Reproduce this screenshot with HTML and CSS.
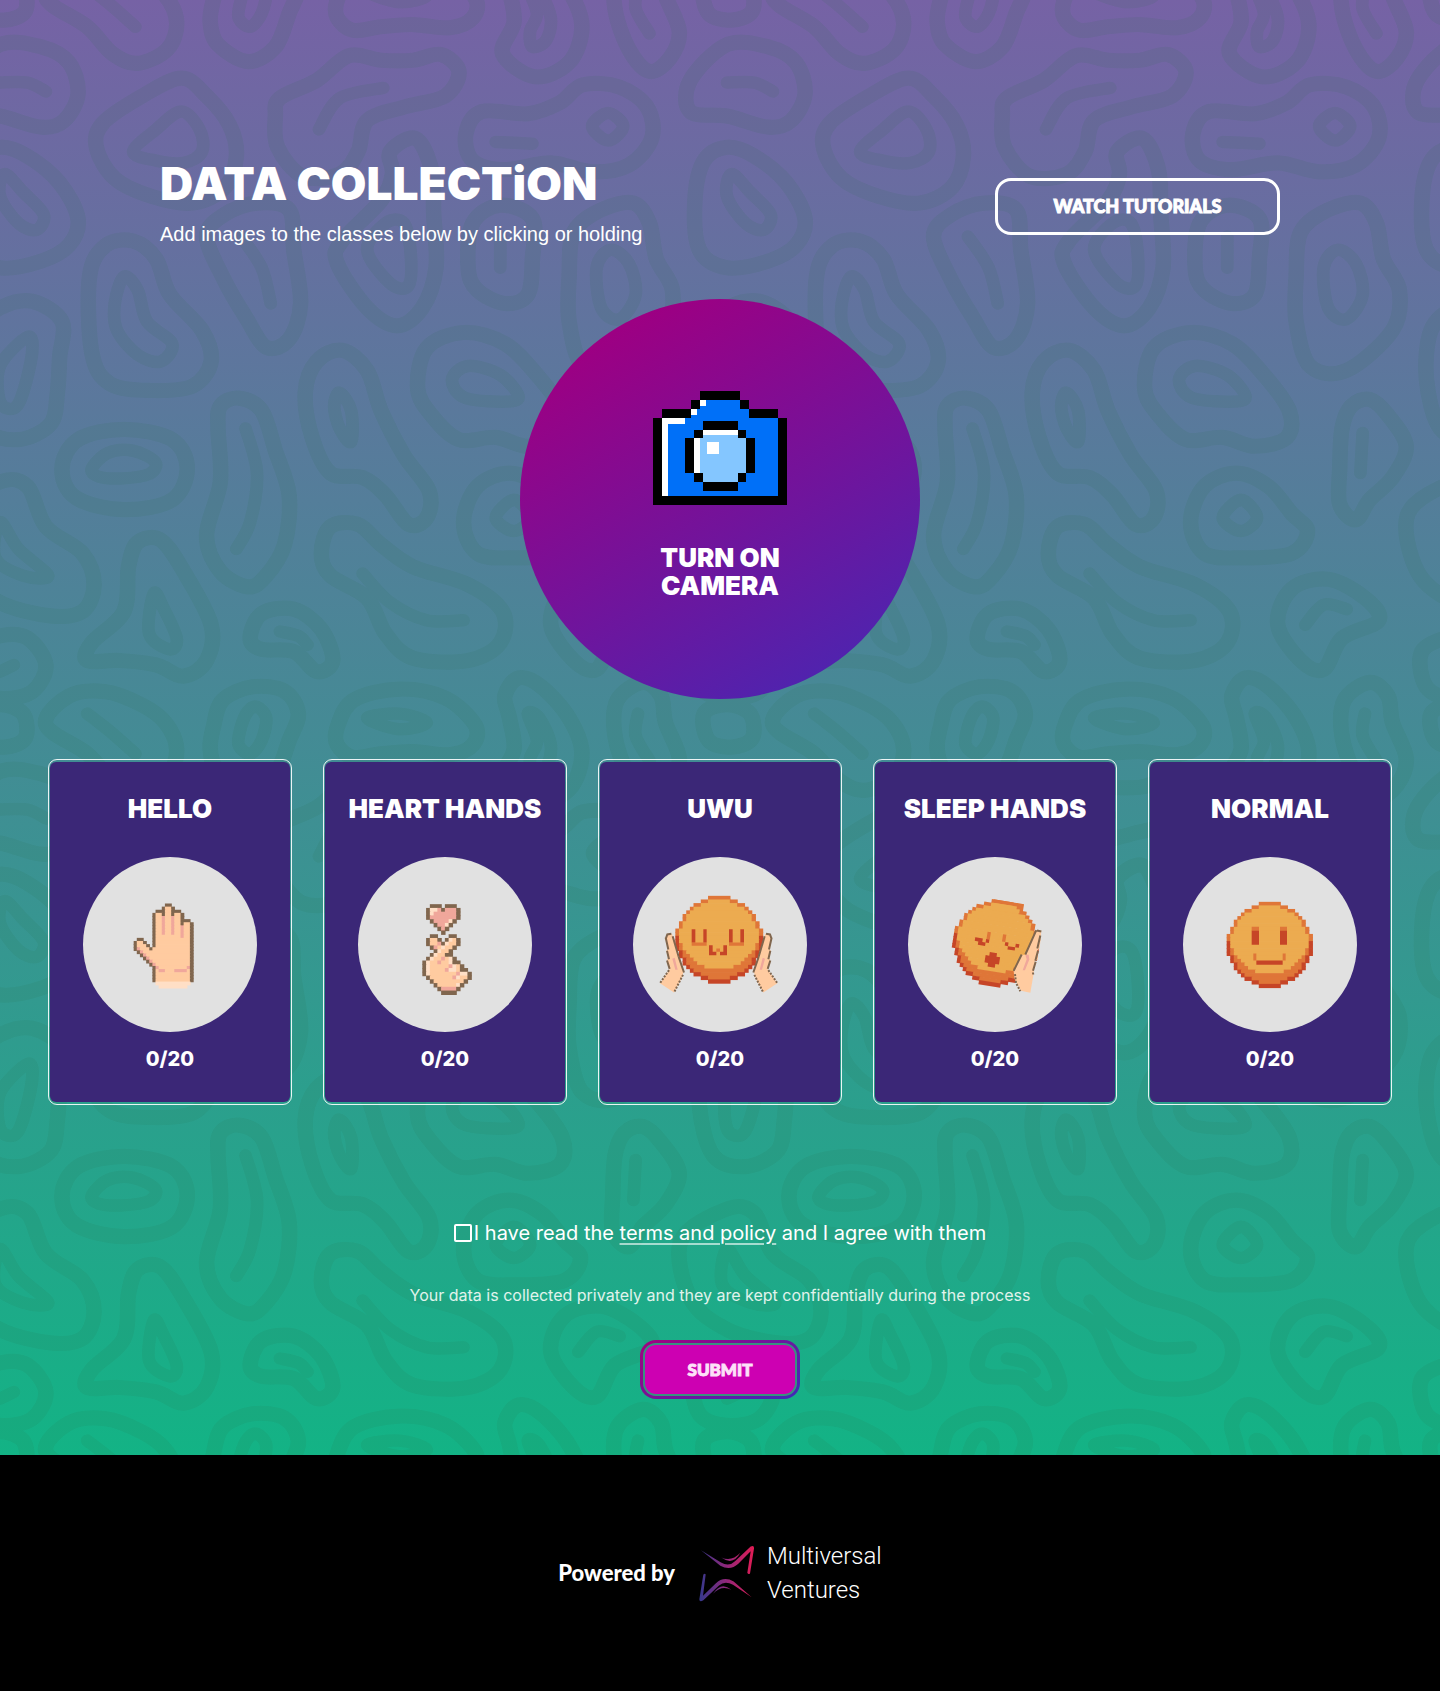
FILE: index.html
```html
<!DOCTYPE html>
<html lang="en">
<head>
    <meta charset="UTF-8">
    <meta name="viewport" content="width=device-width, initial-scale=1.0">
    <title>Data Collection</title>
    <link rel="stylesheet" href="styles.css">
</head>
<body>
    <main class="page">
        <svg class="page-pattern" aria-hidden="true">
            <defs>
                <pattern id="blobPattern" width="727" height="727" patternUnits="userSpaceOnUse"></pattern>
            </defs>
            <rect width="100%" height="100%" fill="url(#blobPattern)"/>
        </svg>

        <header class="header">
            <div class="header-text">
                <h1>DATA COLLECTiON</h1>
                <p>Add images to the classes below by clicking or holding</p>
            </div>
            <button type="button" class="tutorial-button">WATCH TUTORIALS</button>
        </header>

        <button type="button" class="camera-button">
            <svg class="camera-icon" viewBox="39 33 402 341" shape-rendering="crispEdges" aria-hidden="true">
                <path fill="#0070f8" d="M65 112h350v236H65zM180 59h121v55H180zM153 86h174v30H153z"/>
                <path fill="#fff" d="M65 112h18v236H65zM65 112h70v18H65zM180 59h17v18h-17zM153 86h18v18h-18z"/>
                <path fill="#000" d="M180 33h121v26H180zM153 59h27v27h-27zM301 59h26v27h-26zM65 86h88v26H65zM327 86h88v26h-88zM39 112h26v262H39zM415 112h26v262h-26zM39 348h402v26H39z"/>
                <path fill="#84c6ff" d="M188 148h105v157H188zM162 174h157v105H162z"/>
                <path fill="#fff" d="M188 148h105v17H188zM162 174h18v105h-18zM200 186h36v36h-36z"/>
                <path fill="#000" d="M188 122h105v26H188zM162 148h26v26h-26zM293 148h26v26h-26zM135 174h27v105h-27zM319 174h26v105h-26zM162 279h26v26h-26zM293 279h26v26h-26zM188 305h105v26H188z"/>
            </svg>
            <span class="camera-label">TURN ON<br>CAMERA</span>
        </button>

        <section class="cards">
            <div class="card">
                <h2>HELLO</h2>
                <svg class="card-picture" viewBox="129 321 522 524" aria-hidden="true">
                    <g data-sprite="hand" data-x="281" data-y="460" data-size="9.37"></g>
                </svg>
                <p class="card-count">0/20</p>
            </div>
            <div class="card">
                <h2>HEART HANDS</h2>
                <svg class="card-picture" viewBox="114 321 522 524" aria-hidden="true">
                    <g data-sprite="heart" data-x="307" data-y="462" data-size="11.27"></g>
                </svg>
                <p class="card-count">0/20</p>
            </div>
            <div class="card">
                <h2>UWU</h2>
                <svg class="card-picture" viewBox="129 321 522 524" aria-hidden="true">
                    <g data-sprite="face" data-x="256" data-y="437" data-size="10.9"></g>
                    <path fill="#df7638" d="M305 577h45v10h-45zM417 577h45v10h-45zM379 595h11v10h-11z"/>
                    <path fill="#c64527" d="M305 537h11v40h-11zM340 537h10v40h-10zM417 537h11v40h-11zM451 537h11v40h-11zM357 585h11v20h11v10h-22zM400 585h11v30h-21v-10h10z"/>
                    <g id="sideHand">
                        <path fill="#ffcba0" d="M228 562L232 551L246 551L266 618L281 664L275 684L252 727L210 699L239 657L231 628L235 622L229 602L234 597Z"/>
                        <path fill="#f0a79b" d="M247 626l7-3l9 36h-7z"/>
                        <path class="hand-line" d="M228 564L232 553L244 551M248 558L266 620M266 620L282 667M227 562L235 598M231 602L237 627M231 631L239 656"/>
                        <path class="hand-dots" d="M237 660L210 699M279 674L252 727"/>
                    </g>
                    <use href="#sideHand" transform="translate(772 0) scale(-1 1)"/>
                </svg>
                <p class="card-count">0/20</p>
            </div>
            <div class="card">
                <h2>SLEEP HANDS</h2>
                <svg class="card-picture" viewBox="129 321 522 524" aria-hidden="true">
                    <g transform="rotate(9 392 578)">
                        <path fill="#df7638" d="M366 450h92v24h11v12h-103z"/>
                        <g data-sprite="face" data-x="264" data-y="450" data-size="10.7"></g>
                        <path fill="#ecab50" d="M366 460h72v20h-72zM438 468h10v12h-10z"/>
                        <path fill="#df7638" d="M363 549h10v22h-10zM410 549h10v22h-10z"/>
                        <path fill="#c64527" d="M319 571h10v11h11v10h22v-10h10v-11h-10v11h-10v-11h-22v-0h-11zM410 571h10v11h10v10h22v-10h11v-11h-11v11h-22v-11zM379 608h22v11h11v22h-11v11h-22v-11h-11v-22h11z"/>
                    </g>
                    <path fill="#ffcba0" d="M514 540L529 542L524 595L517 600L519 628L510 632L506 670L496 728L468 722L448 685L446 662L470 614L481 614Z"/>
                    <path fill="#f0a79b" d="M481 614h10l2 14l-13 32h-7l12-33z"/>
                    <path class="hand-line" d="M514 540L481 613M470 613L446 662M516 541L529 544M526 556L517 595M519 602L511 632M512 635L504 662"/>
                    <path class="hand-dots" d="M450 672L453 698L466 723M504 667L505 676"/>
                </svg>
                <p class="card-count">0/20</p>
            </div>
            <div class="card">
                <h2>NORMAL</h2>
                <svg class="card-picture" viewBox="129 321 522 524" aria-hidden="true">
                    <g data-sprite="face" data-x="260" data-y="455" data-size="10.7"></g>
                    <path fill="#df7638" d="M335 530h22v11h-22zM420 530h21v11h-21zM340 610h9v21h-9zM428 610h9v21h-9z"/>
                    <path fill="#c64527" d="M335 541h22v43h-22zM420 541h21v43h-21zM349 631h79v13h-79z"/>
                </svg>
                <p class="card-count">0/20</p>
            </div>
        </section>

        <form class="submit-form">
            <div class="terms">
                <input type="checkbox" id="terms">
                <label for="terms">I have read the <a href="#">terms and policy</a> and I agree with them</label>
            </div>
            <p class="notice">Your data is collected privately and they are kept confidentially during the process</p>
            <button type="submit" class="submit-button">SUBMIT</button>
        </form>
    </main>

    <footer class="footer">
        <span class="powered">Powered by</span>
        <div class="brand">
            <svg class="brand-logo" viewBox="482 72 168 170" aria-hidden="true">
                <defs>
                    <linearGradient id="logoGradient" gradientUnits="userSpaceOnUse" x1="484" y1="0" x2="648" y2="0">
                        <stop offset="0" stop-color="#36388c"/>
                        <stop offset="0.5" stop-color="#92277a"/>
                        <stop offset="1" stop-color="#e31c54"/>
                    </linearGradient>
                </defs>
                <path fill="url(#logoGradient)" d="M488 87L548 124Q572 138 590 120L637 76Q648 71 647 82L635 157Q630 161 627 155L637 90L600 128Q576 150 546 134ZM549 109Q580 123 606 95Q584 135 549 109Z"/>
                <path fill="url(#logoGradient)" d="M640 228L584 191Q560 177 542 193L495 237Q483 244 483 234L495 160Q500 155 502 160L494 224L532 187Q556 164 586 181ZM579 206Q550 190 524 218Q548 180 579 206Z"/>
            </svg>
            <span class="brand-name">Multiversal<br>Ventures</span>
        </div>
    </footer>

    <script src="script.js"></script>
</body>
</html>
```
FILE: styles.css
```css
* {
    box-sizing: border-box;
}
body {
    margin: 0;
    background-color: #000;
    color: #fff;
    font-family: Inter, "Open Sans", sans-serif;
}
h1,
h2,
p {
    margin: 0;
}
button {
    font-family: inherit;
    color: #fff;
    cursor: pointer;
}

.page {
    position: relative;
    display: flex;
    flex-direction: column;
    align-items: center;
    padding: 165px 50px 56px;
    background: linear-gradient(#7662a5, #13b385);
}
/* Doodle pattern behind the whole page */
.page-pattern {
    position: absolute;
    inset: 0;
    width: 100%;
    height: 100%;
}
.page > :not(.page-pattern) {
    position: relative;
}

.header {
    display: flex;
    flex-wrap: wrap;
    gap: 20px;
    align-items: center;
    justify-content: space-between;
    width: 100%;
    max-width: 1120px;
}
.header h1 {
    font-size: 46px;
    font-weight: 900;
    line-height: 36px;
    margin-bottom: 20px;
}
.header p {
    font-family: "Liberation Sans", Arial, sans-serif;
    font-size: 20px;
    line-height: 26px;
}
.tutorial-button {
    width: 285px;
    height: 57px;
    border: 3px solid #fff;
    border-radius: 16px;
    background: transparent;
    font-family: Lato, sans-serif;
    font-size: 18px;
    font-weight: 900;
    -webkit-text-stroke: 1px #fff;
}

.camera-button {
    display: flex;
    flex-direction: column;
    align-items: center;
    width: 400px;
    height: 400px;
    margin-top: 52px;
    padding: 92px 0 0;
    border: none;
    border-radius: 50%;
    background: linear-gradient(150deg, #9c0083 14%, #4528b4 98%);
}
.camera-icon {
    width: 134px;
    height: 114px;
}
.camera-label {
    margin-top: 39px;
    font-size: 26px;
    font-weight: 900;
    line-height: 28px;
}

.cards {
    display: grid;
    grid-template-columns: repeat(auto-fit, 240px);
    justify-content: center;
    gap: 35px;
    width: 100%;
    margin-top: 63px;
}
.card {
    position: relative;
    display: flex;
    flex-direction: column;
    align-items: center;
    padding: 33px 0 31px;
    border-radius: 6px;
    background-color: #3b2777;
}
.card::before {
    content: "";
    position: absolute;
    inset: -3px -2px;
    border: 1px solid rgba(255, 255, 255, 0.9);
    border-radius: 9px;
}
.card h2 {
    font-size: 26px;
    font-weight: 900;
    line-height: 28px;
}
.card-picture {
    width: 174px;
    height: 175px;
    margin-top: 34px;
    border-radius: 50%;
    background-color: #e1e1e1;
}
.card-count {
    margin-top: 15px;
    font-size: 20px;
    font-weight: 800;
    line-height: 24px;
}
.hand-line,
.hand-dots {
    fill: none;
    stroke: #80664e;
    stroke-width: 6;
}
.hand-dots {
    stroke-dasharray: 6 4;
}

.submit-form {
    display: flex;
    flex-direction: column;
    align-items: center;
    margin-top: 119px;
}
.terms {
    display: flex;
    align-items: center;
    gap: 2px;
    font-size: 20px;
    line-height: 24px;
}
.terms input {
    appearance: none;
    width: 18px;
    height: 18px;
    margin: 0;
    border: 2px solid #fff;
    border-radius: 2px;
}
.terms input:checked {
    background-color: #cd00b2;
}
.terms a {
    color: #fff;
    text-decoration-color: rgba(255, 255, 255, 0.6);
    text-underline-offset: 3px;
}
.notice {
    margin-top: 40px;
    font-size: 16px;
    line-height: 20px;
    color: #e0f3ec;
}
.submit-button {
    width: 160px;
    height: 59px;
    margin-top: 35px;
    padding: 2px;
    border: 3px solid transparent;
    border-radius: 16px;
    background:
        linear-gradient(#cd00b2, #cd00b2) content-box,
        linear-gradient(#37927f, #37927f) padding-box,
        linear-gradient(150deg, #a3007f, #3f2ab8) border-box;
    font-family: Lato, sans-serif;
    font-size: 17px;
    font-weight: 900;
    color: #fde0f8;
    -webkit-text-stroke: 1px #fde0f8;
}

.footer {
    display: flex;
    align-items: center;
    justify-content: center;
    gap: 24px;
    padding: 84px 20px;
}
.powered {
    font-family: Lato, sans-serif;
    font-size: 22px;
    font-weight: 900;
    line-height: 26px;
}
.brand {
    display: flex;
    align-items: center;
    gap: 12px;
}
.brand-logo {
    width: 56px;
    height: 57px;
}
.brand-name {
    font-family: Roboto, sans-serif;
    font-size: 24px;
    font-weight: 300;
    line-height: 34px;
}
```
FILE: script.js
```javascript
var NS = 'http://www.w3.org/2000/svg';

// Pixel art, one letter per pixel
var colors = {
    d: '#80664e',
    s: '#ffcba0',
    p: '#f0a79b',
    l: '#ffdfc6',
    o: '#df7638',
    y: '#ecab50',
    r: '#c64527'
};

var sprites = {
    hand: [
        '..........dd.......',
        '.........dssd......',
        '.......dddssddd....',
        '......dssdssdssd...',
        '......dsspsspssd...',
        '......dsspsspssddd.',
        '......dsspsspssdssd',
        '......dsspsspsspssd',
        '......dsspsspsspssd',
        '......dsspsspsspssd',
        '......dsssssssspssd',
        '.dd...dsssssssssssd',
        'dssd..dsssssssssssd',
        'dsssd.dsssssssssssd',
        'dpsssdssssssssssssd',
        '.dpsssssssssssssssd',
        '..dpssssssssssssssd',
        '...dpsssssssssssssd',
        '....dpssssssssssssd',
        '.....dpsssssssssssd',
        '......dpssssssssspd',
        '......dsppsssppppsd',
        '......dsssssssssssd',
        '......dsssssssssssd',
        '......dsssssssssssd',
        '.......lllllllllll.',
        '........lllllllll..'
    ],
    heart: [
        '..ddd.ddd....',
        '.dllpdpppd...',
        '.dlppppppd...',
        '.dpppppppd...',
        '..dppppld....',
        '...dppld.....',
        '....dpd......',
        '.....d.......',
        '..dd...dd....',
        '.dssd.dlsd...',
        '.dsspdlssd...',
        '..dpslssd....',
        '...dlssd.....',
        '..dlssdd.....',
        '.dlsspsld....',
        'dlsspssldd...',
        'dlsssssplsd..',
        'dlsssspllsdd.',
        'dlsssssssplld',
        '.dssssssplssd',
        '..dssssssssd.',
        '...dsssssld..',
        '....dppppd...',
        '.....dddd....'
    ],
    face: [
        '.........oooooo.........',
        '.......ooyyyyyyoo.......',
        '.....ooyyyyyyyyyyoo.....',
        '....oyyyyyyyyyyyyyyo....',
        '...oyyyyyyyyyyyyyyyyo...',
        '..oyyyyyyyyyyyyyyyyyyo..',
        '..oyyyyyyyyyyyyyyyyyyo..',
        '.oyyyyyyyyyyyyyyyyyyyyo.',
        '.oyyyyyyyyyyyyyyyyyyyyo.',
        'oyyyyyyyyyyyyyyyyyyyyyyo',
        'oyyyyyyyyyyyyyyyyyyyyyyo',
        'ryyyyyyyyyyyyyyyyyyyyyyr',
        'ryyyyyyyyyyyyyyyyyyyyyyr',
        'royyyyyyyyyyyyyyyyyyyyor',
        'royyyyyyyyyyyyyyyyyyyyor',
        '.royyyyyyyyyyyyyyyyyyor.',
        '.rooyyyyyyyyyyyyyyyyoor.',
        '..rooyyyyyyyyyyyyyyoor..',
        '..roooyyyyyyyyyyyyooor..',
        '...rooooyyyyyyyyoooor...',
        '....roooooooooooooor....',
        '.....rroooooooooorr.....',
        '.......rroooooorr.......',
        '.........rrrrrr.........'
    ]
};

function drawSprite(group) {
    var rows = sprites[group.getAttribute('data-sprite')];
    var x = Number(group.getAttribute('data-x'));
    var y = Number(group.getAttribute('data-y'));
    var size = Number(group.getAttribute('data-size'));

    rows.forEach(function (row, r) {
        // Runs of the same colour become one rectangle
        var re = /([a-z])\1*/g;
        var run;
        while ((run = re.exec(row))) {
            var rect = document.createElementNS(NS, 'rect');
            rect.setAttribute('x', x + run.index * size);
            rect.setAttribute('y', y + r * size);
            // overlap the neighbours a little so no seams show
            rect.setAttribute('width', run[0].length * size + 2);
            rect.setAttribute('height', size + 2);
            rect.setAttribute('fill', colors[run[1]]);
            group.appendChild(rect);
        }
    });
}

document.querySelectorAll('[data-sprite]').forEach(drawSprite);

// Background doodles: the outline of each blob, then what is inside it
var TILE_W = 1584;
var TILE_H = 1629;

var outlines = [
    [135,1050, 170,985, 270,962, 375,985, 408,1050, 375,1120, 270,1142, 165,1115],
    [210,330, 225,275, 310,215, 395,175, 450,215, 500,280, 515,350, 490,420, 420,455, 330,440, 250,400],
    [100,-5, 150,-69, 230,-79, 310,-49, 360,-10, 385,50, 365,110, 300,142, 245,120, 190,60],
    [465,0, 485,-60, 550,-90, 620,-80, 650,-30, 630,30, 600,105, 540,138, 475,100, 458,50],
    [735,0, 770,-60, 870,-85, 970,-65, 1035,-5, 1030,40, 980,62, 900,55, 830,60, 770,68, 735,40],
    [1095,120, 1120,50, 1110,-20, 1100,-70, 1130,-110, 1180,-90, 1240,-20, 1268,60, 1240,140, 1165,172],
    [1340,20, 1345,-60, 1400,-100, 1440,-70, 1450,-10, 1480,70, 1460,130, 1415,160, 1370,110],
    [0,100, 90,105, 150,140, 170,210, 140,270, 90,285, 0,260, -80,250, -80,180],
    [-40,30, 10,45, 55,25, 50,-30, 0,-50, -50,-30],
    [0,330, 60,350, 130,410, 170,490, 150,550, 90,585, 0,600, -60,560, -70,450, -50,360],
    [600,260, 610,220, 690,180, 760,125, 830,135, 900,135, 960,122, 1000,160, 970,215, 880,240, 800,270, 780,340, 740,390, 660,395, 605,330],
    [1015,300, 1050,250, 1150,255, 1220,230, 1270,190, 1350,195, 1410,240, 1420,310, 1370,370, 1290,385, 1200,365, 1100,380, 1030,360],
    [850,340, 905,310, 940,380, 945,480, 950,600, 920,690, 865,730, 800,690, 735,590, 745,540, 830,450, 855,390],
    [450,530, 490,480, 560,455, 630,470, 640,560, 655,680, 630,760, 580,778, 535,710, 490,630],
    [1020,600, 1030,500, 1090,460, 1160,490, 1160,580, 1150,660, 1100,680, 1040,650],
    [1240,620, 1250,520, 1310,470, 1380,455, 1415,500, 1430,580, 1465,650, 1450,740, 1350,830, 1270,820, 1240,720],
    [195,620, 230,550, 290,540, 340,580, 370,660, 440,740, 460,810, 420,865, 330,875, 240,860, 200,790],
    [0,690, 70,675, 135,720, 130,800, 125,880, 110,950, 40,985, -30,960, -60,850, -50,740],
    [665,880, 690,810, 745,785, 800,830, 830,920, 880,1020, 935,1100, 930,1160, 890,1175, 840,1110, 790,1070, 720,1060, 680,980],
    [910,870, 930,780, 1010,745, 1100,770, 1170,840, 1225,920, 1220,980, 1150,1000, 1080,980, 1000,985, 940,930],
    [475,960, 480,910, 520,892, 570,920, 600,1010, 630,1110, 620,1220, 580,1290, 540,1315, 480,1280, 450,1200, 480,1080],
    [1010,1170, 1040,1090, 1110,1060, 1180,1090, 1230,1150, 1265,1190, 1230,1240, 1120,1250, 1040,1240],
    [1340,960, 1360,910, 1400,895, 1440,930, 1480,1000, 1450,1070, 1400,1120, 1370,1165, 1335,1130, 1335,1050],
    [700,1240, 720,1180, 780,1175, 830,1220, 900,1270, 1020,1310, 1095,1370, 1090,1440, 1020,1480, 900,1475, 840,1420, 800,1340, 720,1290],
    [545,1430, 570,1375, 640,1365, 700,1410, 725,1480, 690,1505, 640,1460, 570,1455],
    [280,1270, 300,1215, 350,1210, 400,1280, 460,1400, 450,1480, 400,1515, 340,1490, 260,1480, 190,1480, 200,1440, 270,1370],
    [0,1080, 60,1090, 100,1180, 180,1240, 205,1310, 180,1370, 110,1380, 0,1350, -80,1280, -100,1150],
    [0,1425, 60,1430, 100,1490, 70,1550, 0,1565, -60,1540, -70,1460],
    [1200,1400, 1230,1320, 1310,1298, 1390,1340, 1420,1390, 1340,1430, 1300,1500, 1250,1480]
];

var rings = [
    [200,1050, 235,1015, 290,1010, 338,1035, 325,1062, 265,1072, 215,1068],
    [290,340, 340,290, 395,250, 435,290, 440,340, 400,365, 340,360],
    [525,0, 540,-35, 560,-45, 580,-20, 570,30, 545,60, 520,40],
    [800,-20, 870,-30, 930,-10, 870,5],
    [1150,-30, 1175,-20, 1200,40, 1190,90, 1160,105, 1155,70, 1170,30],
    [10,390, 50,430, 95,480, 80,515, 40,500, 0,440],
    [1290,283, 1325,253, 1358,283, 1325,315],
    [800,560, 840,500, 880,500, 895,570, 890,640, 850,635],
    [1300,600, 1330,560, 1370,590, 1385,660, 1350,715, 1310,690],
    [250,680, 270,620, 300,650, 320,720, 375,770, 350,810, 300,795, 255,740],
    [0,820, 60,755, 70,790, 50,880, 30,915, 0,900],
    [740,880, 765,920, 765,990, 740,960, 728,910],
    [985,850, 1020,820, 1090,840, 1130,890, 1090,900, 1010,890],
    [1080,1160, 1120,1120, 1155,1160, 1120,1190],
    [335,1330, 355,1360, 385,1430, 370,1455, 325,1420],
    [0,1170, 40,1230, 105,1290, 50,1290, -10,1250]
];

var lines = [
    [190,-30, 240,10, 295,60],
    [1390,-30, 1385,20, 1415,75],
    [0,185, 60,185, 100,205],
    [695,290, 740,220, 835,197],
    [1080,318, 1160,322],
    [525,530, 570,600, 590,680],
    [1090,530, 1090,600],
    [535,960, 560,1060, 545,1170, 515,1230],
    [1385,970, 1380,1060],
    [790,1285, 850,1350, 930,1390, 1010,1390],
    [610,1415, 650,1425, 670,1445],
    [0,1505, 30,1490],
    [1260,1400, 1300,1355, 1350,1365]
];

// Smooth curve through a flat list of x, y values
function curve(list, closed) {
    var n = list.length / 2;

    function point(i) {
        i = closed ? (i + n) % n : Math.max(0, Math.min(n - 1, i));
        return [list[i * 2], list[i * 2 + 1]];
    }

    var d = 'M' + point(0);
    for (var i = 0; i < (closed ? n : n - 1); i++) {
        var a = point(i - 1), b = point(i), c = point(i + 1), e = point(i + 2);
        d += 'C' + [
            b[0] + (c[0] - a[0]) / 6, b[1] + (c[1] - a[1]) / 6,
            c[0] - (e[0] - b[0]) / 6, c[1] - (e[1] - b[1]) / 6,
            c[0], c[1]
        ];
    }
    return d + (closed ? 'Z' : '');
}

function toPath(shapes, closed) {
    return shapes.map(function (s) { return curve(s, closed); }).join('');
}

var outer = toPath(outlines, true);
var inner = toPath(rings, true) + toPath(lines, false);
var pattern = document.getElementById('blobPattern');
var tile = document.createElementNS(NS, 'g');
tile.setAttribute('transform', 'scale(' + 727 / TILE_W + ' ' + 727 / TILE_H + ')');
tile.setAttribute('fill', 'none');
tile.setAttribute('stroke', '#1e6440');
tile.setAttribute('stroke-linecap', 'round');
tile.setAttribute('opacity', '0.1');

// Neighbouring copies fill in what crosses the tile edge
[-1, 0, 1].forEach(function (col) {
    [-1, 0, 1].forEach(function (row) {
        [[outer, 34], [inner, 28]].forEach(function (layer) {
            var path = document.createElementNS(NS, 'path');
            path.setAttribute('d', layer[0]);
            path.setAttribute('stroke-width', layer[1]);
            path.setAttribute('transform', 'translate(' + col * TILE_W + ' ' + row * TILE_H + ')');
            tile.appendChild(path);
        });
    });
});
pattern.appendChild(tile);
```
